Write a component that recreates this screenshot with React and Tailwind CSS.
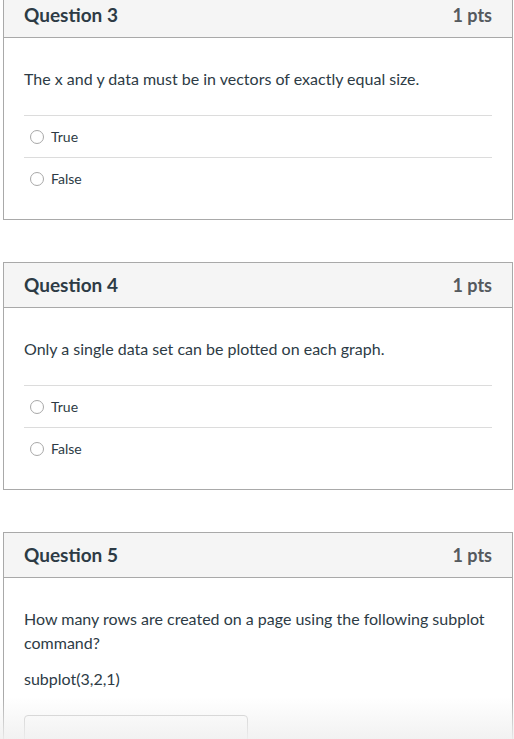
import React from "react";

function Radio({ label }) {
  return (
    <div className="flex h-[42px] items-center border-t border-[#dcdcdc]">
      <span className="ml-[6px] box-border h-[14px] w-[14px] rounded-full border border-[#a8a8a8] bg-white" />
      <span className="ml-[7px] text-[14px] text-[#2d3b45]">{label}</span>
    </div>
  );
}

function Card({ num, children, className = "" }) {
  return (
    <div className={"ml-[3px] w-[510px] border border-[#a9a9a9] bg-white " + className}>
      <div className="flex h-[45px] items-center justify-between border-b border-[#a9a9a9] bg-[#f5f5f5] px-[20px]">
        <span className="text-[19px] font-bold text-[#2d3b45]">Question {num}</span>
        <span className="text-[18px] font-bold text-[#555a5e]">1 pts</span>
      </div>
      <div className="px-[20px] pt-[29px]">{children}</div>
    </div>
  );
}

function TF({ num, text, className }) {
  return (
    <Card num={num} className={className}>
      <p className="text-[16px] leading-[24px] text-[#2d3b45]">{text}</p>
      <div className="mt-[24px] pb-[20px]">
        <Radio label="True" />
        <Radio label="False" />
      </div>
    </Card>
  );
}

export default function App() {
  return (
    <div
      className="relative h-[739px] overflow-hidden bg-white"
      style={{ fontFamily: "Lato, 'Noto Sans', sans-serif" }}
    >
      <TF
        num={3}
        className="mt-[-8px]"
        text="The x and y data must be in vectors of exactly equal size."
      />
      <TF
        num={4}
        className="mt-[42px]"
        text="Only a single data set can be plotted on each graph."
      />
      <Card num={5} className="mt-[42px]">
        <p className="text-[16px] leading-[24px] text-[#2d3b45]">
          How many rows are created on a page using the following subplot command?
        </p>
        <p className="mt-[12px] text-[16px] leading-[24px] text-[#2d3b45]">subplot(3,2,1)</p>
        <div className="mt-[24px] h-[40px] w-[224px] rounded-[4px] border border-[#c8c8c8] bg-white" />
      </Card>
      <div className="pointer-events-none absolute bottom-0 left-0 right-0 h-[42px] bg-gradient-to-b from-white/0 to-[#f0f0f0]/90" />
    </div>
  );
}
